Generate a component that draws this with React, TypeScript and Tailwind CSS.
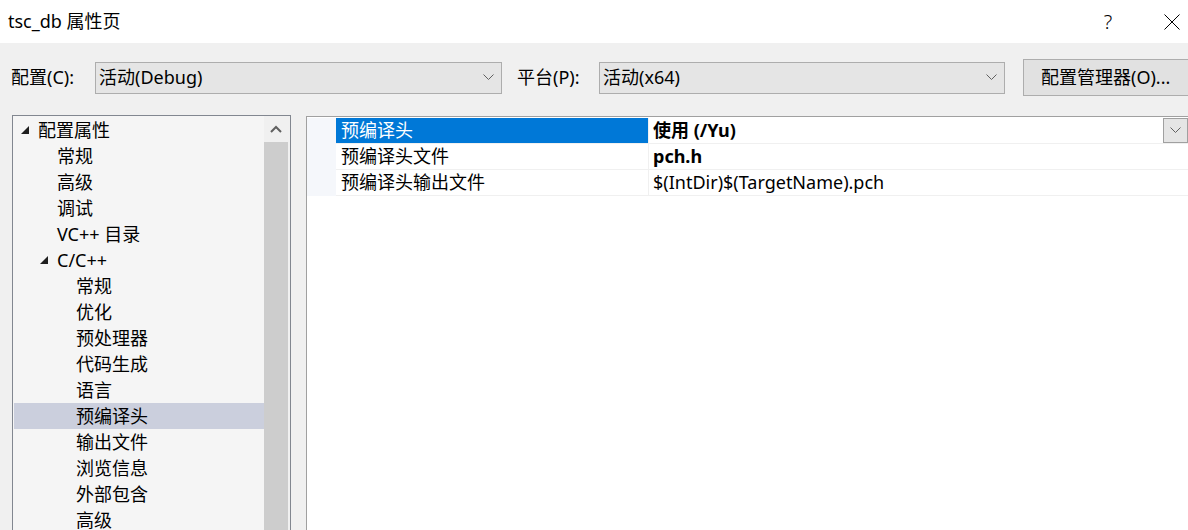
import React from 'react';

type TreeItem = { label: string; level: number; expanded?: boolean; selected?: boolean };

const treeItems: TreeItem[] = [
  { label: '配置属性', level: 0, expanded: true },
  { label: '常规', level: 1 },
  { label: '高级', level: 1 },
  { label: '调试', level: 1 },
  { label: 'VC++ 目录', level: 1 },
  { label: 'C/C++', level: 1, expanded: true },
  { label: '常规', level: 2 },
  { label: '优化', level: 2 },
  { label: '预处理器', level: 2 },
  { label: '代码生成', level: 2 },
  { label: '语言', level: 2 },
  { label: '预编译头', level: 2, selected: true },
  { label: '输出文件', level: 2 },
  { label: '浏览信息', level: 2 },
  { label: '外部包含', level: 2 },
  { label: '高级', level: 2 },
];

const props = [
  { name: '预编译头', value: '使用 (/Yu)', bold: true, selected: true },
  { name: '预编译头文件', value: 'pch.h', bold: true },
  { name: '预编译头输出文件', value: '$(IntDir)$(TargetName).pch', bold: false },
];

function Chevron() {
  return (
    <svg width="11" height="7" viewBox="0 0 11 7" className="shrink-0">
      <polyline points="0.5,0.5 5.5,5.5 10.5,0.5" fill="none" stroke="#606060" strokeWidth="1" />
    </svg>
  );
}

function Expander() {
  return (
    <svg width="8" height="8" viewBox="0 0 8 8" className="shrink-0">
      <polygon points="8,0 8,8 0,8" fill="#1e1e1e" />
    </svg>
  );
}

function Dropdown({ text, width }: { text: string; width: string }) {
  return (
    <div className={`${width} h-[32px] shrink-0 flex items-center justify-between bg-[#e5e5e5] border border-[#adadad] pl-[3px] pr-[7px]`}>
      <span>{text}</span>
      <Chevron />
    </div>
  );
}

export default function App() {
  return (
    <div className="w-[1188px] h-[530px] overflow-hidden bg-[#f0f0f0] text-[18px] text-black font-['Noto_Sans','Noto_Sans_CJK_SC',sans-serif]">
      {/* Title bar */}
      <div className="h-[43px] bg-white flex items-center pl-[8px]">
        <span className="flex-1">tsc_db 属性页</span>
        <span className="w-[20px] text-center mr-[46px] text-[20px] font-light">?</span>
        <svg width="16" height="16" viewBox="0 0 16 16" className="mr-[8px]">
          <line x1="0.5" y1="0.5" x2="15.5" y2="15.5" stroke="#000" strokeWidth="1" />
          <line x1="15.5" y1="0.5" x2="0.5" y2="15.5" stroke="#000" strokeWidth="1" />
        </svg>
      </div>

      {/* Config row */}
      <div className="h-[37px] mt-[16px] flex items-center">
        <span className="ml-[11px] w-[84px] shrink-0">配置(C):</span>
        <Dropdown text="活动(Debug)" width="w-[407px]" />
        <span className="ml-[15px] w-[82px] shrink-0">平台(P):</span>
        <Dropdown text="活动(x64)" width="w-[406px]" />
        <div className="ml-[18px] w-[180px] h-[37px] shrink-0 flex items-center pl-[17px] bg-[#e1e1e1] border border-[#adadad]">
          配置管理器(O)...
        </div>
      </div>

      {/* Body */}
      <div className="mt-[19px] flex items-start">
        {/* Tree */}
        <div className="ml-[12px] w-[279px] h-[440px] shrink-0 border border-[#828790] bg-[#f5f5f5] flex">
          <div className="w-[251px] pt-[1px] pl-[1px]">
            {treeItems.map((item, i) => (
              <div
                key={i}
                className={`h-[26px] leading-[26px] flex items-center ${item.selected ? 'bg-[#cbcfdd]' : ''}`}
                style={{ paddingLeft: 7 + item.level * 19 }}
              >
                <span className="w-[17px] flex items-center">{item.expanded ? <Expander /> : null}</span>
                <span>{item.label}</span>
              </div>
            ))}
          </div>
          <div className="w-[24px] flex flex-col">
            <div className="h-[26px] bg-[#f0f0f0] flex items-center justify-center">
              <svg width="12" height="8" viewBox="0 0 12 8">
                <polyline points="1,7 6,2 11,7" fill="none" stroke="#606060" strokeWidth="2" />
              </svg>
            </div>
            <div className="flex-1 bg-[#cdcdcd]" />
          </div>
          <div className="w-[2px] bg-[#f0f0f0]" />
        </div>

        {/* Property grid */}
        <div className="ml-[15px] mt-[1px] flex-1 h-[440px] bg-white border-l border-t border-[#a0a0a0] pt-[1px]">
          <div className="flex">
            <div className="w-[29px] h-[78px] bg-[#f5f7fb] shrink-0" />
            <div className="flex-1">
              {props.map((p, i) => (
                <div key={i} className="h-[26px] flex border-b border-[#f0f0f0]">
                  <div
                    className={`w-[312px] shrink-0 pl-[5px] leading-[25px] ${p.selected ? 'bg-[#0078d7] text-white' : ''}`}
                  >
                    {p.name}
                  </div>
                  <div className={`flex-1 pl-[4px] leading-[25px] border-l border-[#f0f0f0] ${p.bold ? 'font-bold' : ''}`}>
                    {p.value}
                  </div>
                  {p.selected ? (
                    <div className="w-[25px] h-[25px] shrink-0 bg-[#e5e5e5] border border-[#a0a0a0] flex items-center justify-center">
                      <Chevron />
                    </div>
                  ) : null}
                </div>
              ))}
            </div>
          </div>
        </div>
      </div>
    </div>
  );
}
